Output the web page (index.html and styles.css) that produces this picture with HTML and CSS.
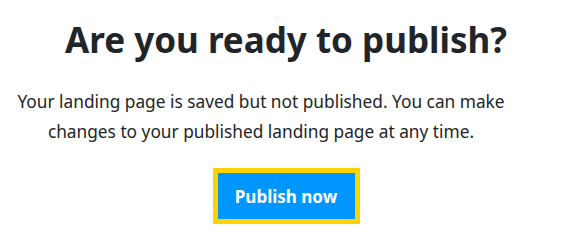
FILE: index.html
```html
<!DOCTYPE html>
<html>
<head>
<meta charset="utf-8">
<link rel="stylesheet" href="styles.css">
</head>
<body>
<div class="panel">
  <h1 class="title">Are you ready to publish?</h1>
  <p class="lead">Your landing page is saved but not published. You can make changes to your published landing page at any time.</p>
  <div class="actions">
    <button class="publish">Publish now</button>
  </div>
</div>
</body>
</html>
```

FILE: styles.css
```css
html, body {
  margin: 0;
  padding: 0;
  background: #ffffff;
}
.panel {
  font-family: "Noto Sans", "Open Sans", sans-serif;
  color: #212529;
  text-align: center;
  padding: 12px 8px 0;
}
.title {
  margin: 0;
  font-size: 35px;
  font-weight: 700;
  line-height: 56px;
}
.lead {
  margin: 19px 0 0 3px;
  font-size: 17.3px;
  line-height: 30px;
  width: 500px;
}
.actions {
  margin-top: 21px;
  display: flex;
  justify-content: center;
}
.publish {
  font-family: inherit;
  font-size: 17px;
  font-weight: 700;
  color: #ffffff;
  background: #0096ff;
  border: 5px solid #ffd200;
  width: 147px;
  height: 56px;
  padding: 0;
  cursor: pointer;
}
```
